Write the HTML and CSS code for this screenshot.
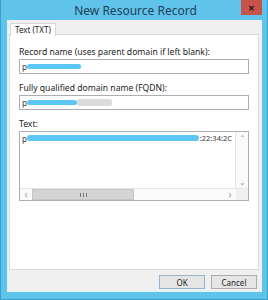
FILE: index.html
```html
<!DOCTYPE html>
<html>
<head>
<meta charset="utf-8">
<link rel="stylesheet" href="styles.css">
</head>
<body>
<div class="window">
  <div class="titlebar">
    <span class="title">New Resource Record</span>
    <span class="close">✕</span>
  </div>
  <div class="client">
    <div class="tabs"><div class="tab">Text (TXT)</div></div>
    <div class="panel">
      <div class="label">Record name (uses parent domain if left blank):</div>
      <div class="input"><span class="ch">p</span><span class="blur b1"></span></div>
      <div class="label">Fully qualified domain name (FQDN):</div>
      <div class="input"><span class="ch">p</span><span class="blur b2"></span><span class="gray"></span></div>
      <div class="label">Text:</div>
      <div class="textarea">
        <div class="ta-main">
          <div class="ta-text">
            <div class="line"><span class="ch">p</span><span class="blur b3"></span><span class="tail">:22:34:2C</span></div>
          </div>
          <div class="vscroll"><span class="arr">⌃</span><span class="arr">⌄</span></div>
        </div>
        <div class="hscroll">
          <span class="harr">‹</span>
          <span class="thumb"><span class="grip"></span></span>
          <span class="track"></span>
          <span class="harr">›</span>
          <span class="corner"></span>
        </div>
      </div>
    </div>
    <div class="buttons">
      <div class="btn">OK</div>
      <div class="btn">Cancel</div>
    </div>
  </div>
</div>
</body>
</html>
```
FILE: styles.css
```css
html, body { margin: 0; padding: 0; }
body { width: 268px; height: 300px; overflow: hidden; font-family: "Noto Sans", "Open Sans", sans-serif; }
.window {
  box-sizing: border-box; height: 300px; width: 268px;
  background: #60c3ea;
  border-left: 1px solid #3a9fcd; border-right: 1px solid #3a9fcd; border-bottom: 1px solid #3a9fcd;
  padding: 0 5px 7px 6px;
  display: flex; flex-direction: column;
}
.titlebar { height: 20px; position: relative; display: flex; align-items: center; justify-content: center; }
.title { font-size: 12px; color: #1d3f57; margin-left: 2px; margin-top: 1px; }
.close {
  position: absolute; right: 0; top: 0; width: 21px; height: 15px;
  background: #c7534b; color: #2a1010; font-size: 8px; font-weight: bold;
  display: flex; align-items: center; justify-content: center;
}
.client {
  flex: 1; background: #f0f0f0; display: flex; flex-direction: column;
  padding: 4px 3px 0 1px;
  border-left: 1px solid #dff3fb; border-bottom: 1px solid #dff3fb;
}
.tabs { display: flex; padding-left: 1px; height: 10px; position: relative; z-index: 1; }
.tab {
  background: #fff; border: 1px solid #d9d9d9; border-bottom: none;
  font-size: 8px; color: #222; padding: 0 4px; line-height: 12px; height: 12px; margin-top: -1px;
}
.panel {
  background: #fff; border: 1px solid #d9d9d9; height: 236px; box-sizing: border-box;
  padding: 12px 9px 0 9px; display: flex; flex-direction: column;
}
.label { font-size: 8.6px; color: #222; line-height: 11px; height: 11px; white-space: nowrap; }
.input {
  height: 15px; box-sizing: border-box; border: 1px solid #abadb3; margin: 1px 0 9px;
  display: flex; align-items: center; padding-left: 2px;
}
.ch { font-size: 8px; color: #333; }
.blur { height: 5px; border-radius: 3px; background: #5cc6f4; display: inline-block; }
.b1 { width: 54px; margin-left: 0; }
.b2 { width: 50px; }
.gray { width: 35px; height: 7px; background: #dcdcdc; display: inline-block; border-radius: 2px; }
.textarea {
  margin-top: 1px; height: 70px; box-sizing: border-box; border: 1px solid #abadb3;
  display: flex; flex-direction: column;
}
.ta-main { flex: 1; display: flex; }
.ta-text { flex: 1; padding: 1px 2px; }
.line { display: flex; align-items: center; height: 10px; }
.b3 { flex: 1; height: 6px; }
.tail { font-size: 7.5px; color: #333; margin-left: 1px; margin-right: 1px; }
.vscroll {
  width: 12px; background: #fafafa; border-left: 1px solid #e6e6e6;
  display: flex; flex-direction: column; justify-content: space-between; align-items: center;
  color: #9a9a9a; font-size: 8px; line-height: 8px; padding: 2px 0;
}
.hscroll { height: 11px; display: flex; background: #fafafa; border-top: 1px solid #e6e6e6; }
.harr { width: 12px; color: #9a9a9a; font-size: 10px; line-height: 10px; text-align: center; }
.thumb { width: 102px; background: #d4d4d4; border: 1px solid #c6c6c6; box-sizing: border-box; display: flex; align-items: center; justify-content: center; }
.grip { width: 5px; height: 4px; border-left: 1px solid #777; border-right: 1px solid #777; position: relative; }
.grip::after { content: ""; position: absolute; left: 2px; top: 0; width: 1px; height: 4px; background: #777; }
.track { flex: 1; }
.corner { width: 12px; background: #f0f0f0; }
.buttons { flex: 1; display: flex; justify-content: flex-end; align-items: flex-start; gap: 6px; padding-top: 5px; padding-right: 2px; }
.btn {
  width: 46px; height: 14px; box-sizing: border-box; border: 1px solid #acacac;
  background: #e5e5e5; font-size: 8px; color: #222; display: flex; align-items: center; justify-content: center;
}
.btn:first-child { border-color: #8fb6d3; }
```
